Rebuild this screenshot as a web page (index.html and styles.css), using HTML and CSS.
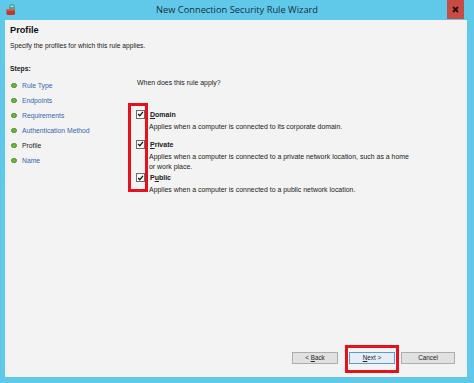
FILE: index.html
```html
<!DOCTYPE html>
<html>
<head>
<meta charset="utf-8">
<link rel="stylesheet" href="styles.css">
</head>
<body>
<div class="window">
  <div class="titlebar">
    <div class="icon-box">
      <svg class="app-icon" width="10" height="13" viewBox="0 0 10 13">
        <circle cx="6" cy="4" r="3" fill="#3aa7a0"/>
        <path d="M4.5 3.2 L7.5 3.2" stroke="#e8f6f0" stroke-width="1"/>
        <rect x="0.5" y="6" width="8.5" height="6" rx="1.2" fill="#c0392b"/>
        <rect x="0.5" y="6" width="8.5" height="2" rx="1" fill="#d9584a"/>
      </svg>
    </div>
    <div class="title">New Connection Security Rule Wizard</div>
    <div class="close-box">
      <div class="close">
        <svg width="17" height="19" viewBox="0 0 17 19">
          <path d="M6 7 L11 12 M11 7 L6 12" stroke="#2a0e0b" stroke-width="1.8"/>
        </svg>
      </div>
    </div>
  </div>
  <div class="panel">
    <div class="header">
      <div class="h1">Profile</div>
      <div class="sub">Specify the profiles for which this rule applies.</div>
    </div>
    <div class="main">
      <div class="steps">
        <div class="steps-title">Steps:</div>
        <ul class="step-list">
          <li class="step"><span class="dot"></span>Rule Type</li>
          <li class="step"><span class="dot"></span>Endpoints</li>
          <li class="step"><span class="dot"></span>Requirements</li>
          <li class="step"><span class="dot"></span>Authentication Method</li>
          <li class="step current"><span class="dot"></span>Profile</li>
          <li class="step"><span class="dot"></span>Name</li>
        </ul>
      </div>
      <div class="content">
        <div class="question">When does this rule apply?</div>
        <div class="options">
          <div class="highlight"></div>
          <div class="option">
            <div class="opt-label"><span class="cb"><svg width="8" height="8" viewBox="0 0 8 8"><path d="M1.3 4 L3.2 6 L6.8 1.6" fill="none" stroke="#111" stroke-width="1.4"/></svg></span><span class="lbl"><u>D</u>omain</span></div>
            <div class="desc">Applies when a computer is connected to its corporate domain.</div>
          </div>
          <div class="option private">
            <div class="opt-label"><span class="cb"><svg width="8" height="8" viewBox="0 0 8 8"><path d="M1.3 4 L3.2 6 L6.8 1.6" fill="none" stroke="#111" stroke-width="1.4"/></svg></span><span class="lbl"><u>P</u>rivate</span></div>
            <div class="desc">Applies when a computer is connected to a private network location, such as a home<br>or work place.</div>
          </div>
          <div class="option public">
            <div class="opt-label"><span class="cb"><svg width="8" height="8" viewBox="0 0 8 8"><path d="M1.3 4 L3.2 6 L6.8 1.6" fill="none" stroke="#111" stroke-width="1.4"/></svg></span><span class="lbl">P<u>u</u>blic</span></div>
            <div class="desc">Applies when a computer is connected to a public network location.</div>
          </div>
        </div>
      </div>
    </div>
    <div class="footer">
      <div class="btn back">&lt; <u>B</u>ack</div>
      <div class="btn next"><u>N</u>ext &gt;<div class="highlight-next"></div></div>
      <div class="btn cancel">Cancel</div>
    </div>
  </div>
</div>
</body>
</html>
```
FILE: styles.css
```css
html, body {
  margin: 0;
  padding: 0;
}
body {
  width: 474px;
  height: 383px;
  overflow: hidden;
  font-family: "Liberation Sans", Arial, sans-serif;
}
.window {
  width: 474px;
  height: 383px;
  background: #60c9ea;
  display: flex;
  flex-direction: column;
}
.titlebar {
  height: 20px;
  flex: none;
  display: flex;
  align-items: flex-start;
}
.icon-box {
  width: 30px;
  flex: none;
}
.app-icon {
  display: block;
  margin: 3px 0 0 6px;
}
.title {
  flex: 1;
  text-align: center;
  font-family: "Open Sans", "Liberation Sans", sans-serif;
  font-size: 9.3px;
  line-height: 20px;
  color: #1b2c3c;
}
.close-box {
  width: 30px;
  flex: none;
  display: flex;
  justify-content: flex-end;
}
.close {
  width: 17px;
  height: 19px;
  margin-right: 10px;
  background: #c74c44;
}
.close svg {
  display: block;
}
.panel {
  flex: 1;
  margin: 0 7px 6px 5px;
  background: #f3f3f3;
  display: flex;
  flex-direction: column;
  color: #1a1a1a;
}
.header {
  padding: 4px 0 0 5px;
}
.h1 {
  font-weight: bold;
  font-size: 9.2px;
  line-height: 12px;
  color: #111;
}
.sub {
  margin-top: 5px;
  font-size: 6.7px;
  line-height: 10px;
}
.main {
  display: flex;
  padding-left: 5px;
  margin-top: 13px;
  flex: 1;
}
.steps {
  width: 126px;
}
.steps-title {
  font-weight: bold;
  font-size: 6.8px;
  line-height: 10px;
}
.step-list {
  list-style: none;
  margin: 4px 0 0 0;
  padding: 0;
}
.step {
  display: flex;
  align-items: center;
  height: 15px;
  font-size: 6.8px;
  color: #3566b3;
}
.step.current {
  color: #1a1a1a;
}
.dot {
  width: 3.5px;
  height: 3.5px;
  border-radius: 50%;
  background: #6cb43f;
  border: 0.5px solid #4f8f2a;
  margin: 0 5.5px 0 1px;
}
.content {
  flex: 1;
  font-size: 6.95px;
}
.question {
  margin-top: 14px;
  padding-left: 1px;
  line-height: 10px;
}
.options {
  position: relative;
  margin-top: 21px;
}
.highlight {
  position: absolute;
  left: -8px;
  top: -6px;
  width: 14px;
  height: 83px;
  border: 3px solid #e3121c;
}
.option.private {
  margin-top: 7.5px;
}
.option.public {
  margin-top: 1px;
}
.opt-label {
  display: flex;
  align-items: center;
  height: 10px;
}
.cb {
  width: 7px;
  height: 7px;
  border: 0.5px solid #6d6d6d;
  background: #fff;
  margin-right: 5px;
  display: flex;
  align-items: center;
  justify-content: center;
}
.cb svg {
  display: block;
}
.lbl {
  font-weight: bold;
  font-size: 7px;
  color: #222;
}
.desc {
  margin-top: 2.5px;
  padding-left: 13px;
  line-height: 10px;
}
.footer {
  display: flex;
  justify-content: flex-end;
  padding: 0 12px 13px 0;
}
.btn {
  position: relative;
  box-sizing: border-box;
  height: 12px;
  border: 1px solid #acacac;
  background: #e1e1e1;
  font-size: 6.3px;
  line-height: 10px;
  text-align: center;
  color: #222;
}
.back {
  width: 46px;
}
.next {
  width: 46px;
  margin-left: 11px;
  border-color: #5a9bd5;
  background: #e5eef7;
}
.cancel {
  width: 54px;
  margin-left: 6px;
}
.highlight-next {
  position: absolute;
  left: -5px;
  top: -8px;
  width: 48px;
  height: 22px;
  border: 3px solid #e3121c;
}
```
